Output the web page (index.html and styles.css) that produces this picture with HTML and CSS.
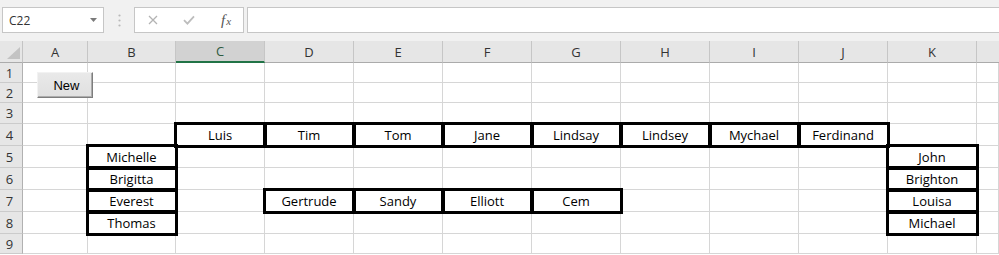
FILE: index.html
```html
<!DOCTYPE html>
<html lang="en">
<head>
<meta charset="utf-8">
<title>Sheet</title>
<link rel="stylesheet" href="styles.css">
</head>
<body>
<div class="app">
  <div class="fbar">
    <div class="namebox">
      <span class="nb-text">C22</span>
      <svg class="caret" width="7" height="4" viewBox="0 0 7 4"><path d="M0 0H7L3.5 4Z" fill="#7a7a7a"/></svg>
    </div>
    <div class="sep">
      <svg width="3" height="13" viewBox="0 0 3 13"><circle cx="1.5" cy="1.5" r="1.1" fill="#b9b9b9"/><circle cx="1.5" cy="6.5" r="1.1" fill="#b9b9b9"/><circle cx="1.5" cy="11.5" r="1.1" fill="#b9b9b9"/></svg>
    </div>
    <div class="fxbox">
      <div class="slot"><svg width="10" height="10" viewBox="0 0 10 10"><path d="M1 1L9 9M9 1L1 9" stroke="#b3b3b3" stroke-width="1.3" fill="none"/></svg></div>
      <div class="slot"><svg width="12" height="10" viewBox="0 0 12 10"><path d="M1 5.2L4.4 8.6L11 1.4" stroke="#bdbdbd" stroke-width="1.8" fill="none"/></svg></div>
      <div class="slot fx-slot"><span class="fx"><span class="fx-f">f</span><span class="fx-x">x</span></span></div>
    </div>
    <div class="finput"></div>
  </div>

  <div class="sheet">
    <div class="corner"><svg width="13" height="12" viewBox="0 0 13 12"><path d="M13 0V12H0Z" fill="#c3c3c3"/></svg></div>
    <div class="ch">A</div><div class="ch">B</div><div class="ch sel">C</div><div class="ch">D</div><div class="ch">E</div><div class="ch">F</div><div class="ch">G</div><div class="ch">H</div><div class="ch">I</div><div class="ch">J</div><div class="ch">K</div><div class="ch last"></div>

    <div class="rh">1</div>
    <div class="c"></div><div class="c"></div><div class="c"></div><div class="c"></div><div class="c"></div><div class="c"></div><div class="c"></div><div class="c"></div><div class="c"></div><div class="c"></div><div class="c"></div><div class="c"></div>

    <div class="rh">2</div>
    <div class="c"></div><div class="c"></div><div class="c"></div><div class="c"></div><div class="c"></div><div class="c"></div><div class="c"></div><div class="c"></div><div class="c"></div><div class="c"></div><div class="c"></div><div class="c"></div>

    <div class="rh">3</div>
    <div class="c"></div><div class="c"></div><div class="c"></div><div class="c"></div><div class="c"></div><div class="c"></div><div class="c"></div><div class="c"></div><div class="c"></div><div class="c"></div><div class="c"></div><div class="c"></div>

    <div class="rh">4</div>
    <div class="c"></div><div class="c"></div>
    <div class="c b">Luis</div><div class="c b">Tim</div><div class="c b">Tom</div><div class="c b">Jane</div><div class="c b">Lindsay</div><div class="c b">Lindsey</div><div class="c b">Mychael</div><div class="c b">Ferdinand</div>
    <div class="c"></div><div class="c"></div>

    <div class="rh">5</div>
    <div class="c"></div><div class="c b">Michelle</div>
    <div class="c"></div><div class="c"></div><div class="c"></div><div class="c"></div><div class="c"></div><div class="c"></div><div class="c"></div><div class="c"></div>
    <div class="c b">John</div><div class="c"></div>

    <div class="rh">6</div>
    <div class="c"></div><div class="c b">Brigitta</div>
    <div class="c"></div><div class="c"></div><div class="c"></div><div class="c"></div><div class="c"></div><div class="c"></div><div class="c"></div><div class="c"></div>
    <div class="c b">Brighton</div><div class="c"></div>

    <div class="rh">7</div>
    <div class="c"></div><div class="c b">Everest</div>
    <div class="c"></div><div class="c b">Gertrude</div><div class="c b">Sandy</div><div class="c b">Elliott</div><div class="c b">Cem</div><div class="c"></div><div class="c"></div><div class="c"></div>
    <div class="c b">Louisa</div><div class="c"></div>

    <div class="rh">8</div>
    <div class="c"></div><div class="c b">Thomas</div>
    <div class="c"></div><div class="c"></div><div class="c"></div><div class="c"></div><div class="c"></div><div class="c"></div><div class="c"></div><div class="c"></div>
    <div class="c b">Michael</div><div class="c"></div>

    <div class="rh">9</div>
    <div class="c"></div><div class="c"></div><div class="c"></div><div class="c"></div><div class="c"></div><div class="c"></div><div class="c"></div><div class="c"></div><div class="c"></div><div class="c"></div><div class="c"></div><div class="c"></div>

    <div class="btn">New</div>
  </div>
</div>
</body>
</html>
```

FILE: styles.css
```css
* {
  box-sizing: border-box;
}

html, body {
  margin: 0;
  padding: 0;
  background: #ffffff;
}

body {
  font-family: "Open Sans", "Liberation Sans", sans-serif;
  overflow: hidden;
}

.app {
  width: 999px;
  height: 255px;
  overflow: hidden;
  background: #ffffff;
}

/* ---------- formula bar ---------- */
.fbar {
  height: 41px;
  background: #f1f1f1;
  display: flex;
  align-items: flex-start;
  padding-top: 7px;
  padding-left: 2px;
}

.namebox {
  width: 102px;
  height: 26px;
  background: #ffffff;
  border: 1px solid #c6c6c6;
  display: flex;
  align-items: center;
  padding-left: 6px;
  padding-right: 6px;
  font-size: 12px;
  color: #333333;
}

.namebox .caret {
  margin-left: auto;
  margin-top: -1px;
}

.sep {
  width: 30px;
  height: 26px;
  display: flex;
  align-items: center;
  justify-content: center;
}

.fxbox {
  width: 110px;
  height: 26px;
  background: #ffffff;
  border: 1px solid #c6c6c6;
  display: flex;
  align-items: center;
}

.slot {
  width: 36px;
  height: 24px;
  display: flex;
  align-items: center;
  justify-content: center;
}

.fx-slot {
  padding-left: 2px;
}

.fx {
  font-family: "Liberation Serif", "DejaVu Serif", serif;
  font-style: italic;
  color: #555555;
  line-height: 1;
  white-space: nowrap;
}

.fx-f {
  font-size: 15px;
}

.fx-x {
  font-size: 11px;
  margin-left: 1px;
}

.finput {
  flex: 1;
  margin-left: 3px;
  height: 26px;
  background: #ffffff;
  border: 1px solid #c6c6c6;
  border-right: none;
}

/* ---------- sheet grid ---------- */
.sheet {
  position: relative;
  display: grid;
  grid-template-columns: 23px 65px 88px repeat(9, 89px) 1fr;
  grid-template-rows: 22px 20px 20px 21px 22px 22px 22px 22px 22px 20px;
  font-size: 13px;
}

.corner {
  background: #e6e6e6;
  border-right: 1px solid #c4c4c4;
  border-bottom: 1px solid #ababab;
  display: flex;
  align-items: flex-end;
  justify-content: flex-end;
  padding: 0 2px 3px 0;
}

.corner svg {
  display: block;
}

.ch {
  background: #e6e6e6;
  border-right: 1px solid #c6c6c6;
  border-bottom: 1px solid #ababab;
  display: flex;
  align-items: center;
  justify-content: center;
  color: #333333;
  line-height: 18px;
}

.ch.sel {
  background: #d2d2d2;
  border-bottom: 2px solid #217346;
  color: #2f5a3f;
}

.ch.last {
  border-right: none;
}

.rh {
  background: #e6e6e6;
  border-right: 1px solid #b1b1b1;
  border-bottom: 1px solid #cbcbcb;
  display: flex;
  align-items: center;
  justify-content: center;
  padding-right: 3px;
  color: #333333;
  line-height: 18px;
}

.c {
  border-right: 1px solid #d6d6d6;
  border-bottom: 1px solid #d6d6d6;
  display: flex;
  align-items: center;
  justify-content: center;
  color: #000000;
  line-height: 18px;
  white-space: nowrap;
}

.c.b {
  position: relative;
  z-index: 1;
  outline: 3px solid #000000;
  outline-offset: -1px;
}

/* ---------- form button over the sheet ---------- */
.btn {
  position: absolute;
  left: 37px;
  top: 31px;
  width: 56px;
  height: 26px;
  z-index: 2;
  background: linear-gradient(#e9e9e9, #e0e0e0);
  border: 1px solid;
  border-color: #f2f2f2 #7d7d7d #7d7d7d #f2f2f2;
  box-shadow: inset -1px -1px 0 #acacac;
  display: flex;
  align-items: center;
  justify-content: center;
  padding-left: 3px;
  font-family: "Liberation Sans", Arial, sans-serif;
  font-size: 13px;
  color: #000000;
}
```
